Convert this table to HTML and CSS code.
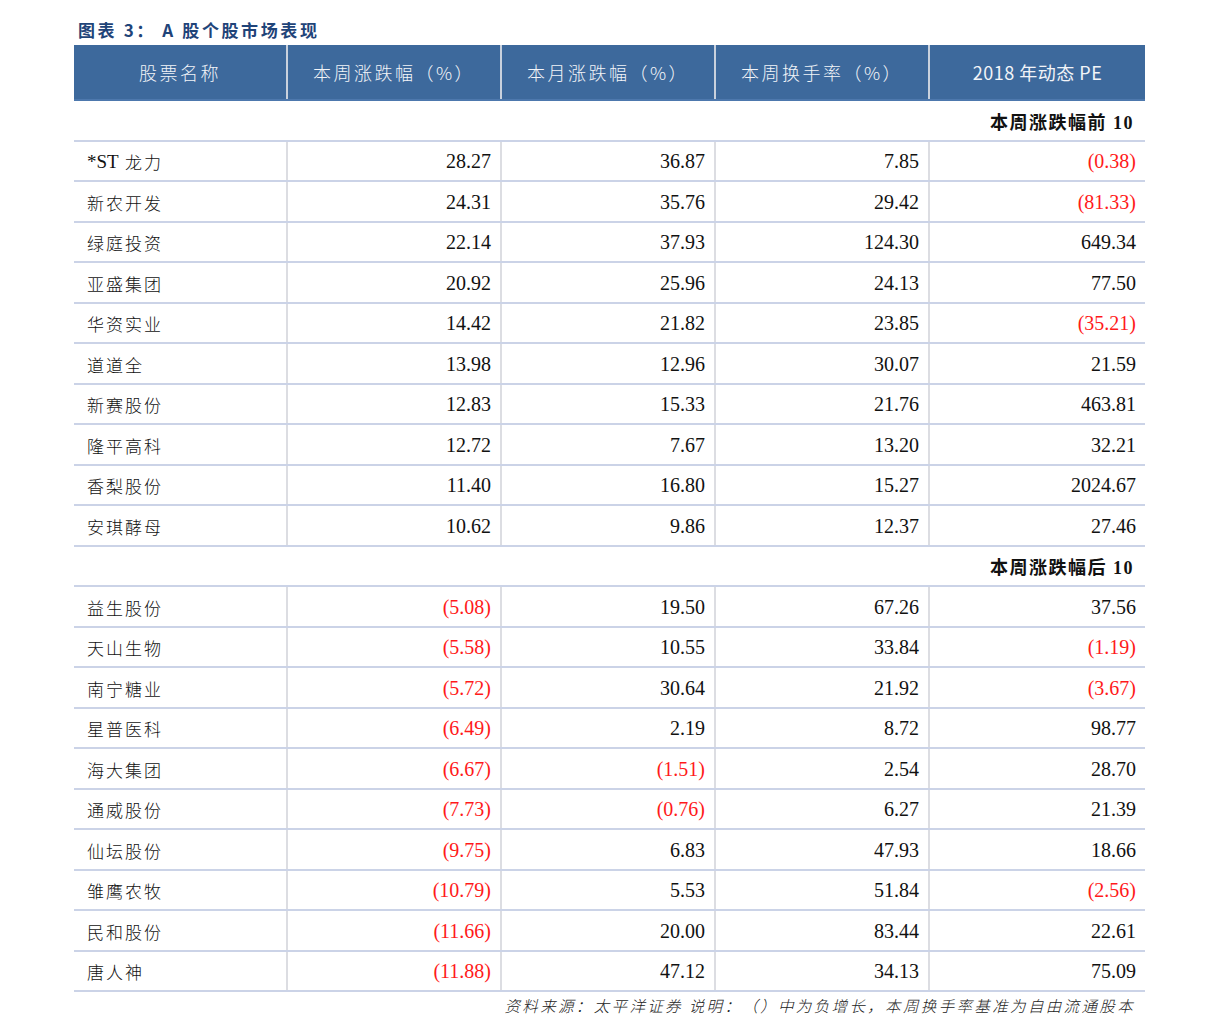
FILE: index.html
```html
<!DOCTYPE html>
<html lang="zh">
<head>
<meta charset="utf-8">
<link rel="stylesheet" href="styles.css">
</head>
<body>
<div class="page">
  <div class="title">图表 3： A 股个股市场表现</div>
  <div class="table">
    <div class="row head">
      <div class="cell">股票名称</div>
      <div class="cell">本周涨跌幅（%）</div>
      <div class="cell">本月涨跌幅（%）</div>
      <div class="cell">本周换手率（%）</div>
      <div class="cell pe">2018 年动态 PE</div>
    </div>
    <div class="row section"><div class="sec">本周涨跌幅前 10</div></div>
    <div class="row"><div class="cell name"><span class="lat">*ST</span>&nbsp;龙力</div><div class="cell">28.27</div><div class="cell">36.87</div><div class="cell">7.85</div><div class="cell neg">(0.38)</div></div>
    <div class="row"><div class="cell name">新农开发</div><div class="cell">24.31</div><div class="cell">35.76</div><div class="cell">29.42</div><div class="cell neg">(81.33)</div></div>
    <div class="row"><div class="cell name">绿庭投资</div><div class="cell">22.14</div><div class="cell">37.93</div><div class="cell">124.30</div><div class="cell">649.34</div></div>
    <div class="row"><div class="cell name">亚盛集团</div><div class="cell">20.92</div><div class="cell">25.96</div><div class="cell">24.13</div><div class="cell">77.50</div></div>
    <div class="row"><div class="cell name">华资实业</div><div class="cell">14.42</div><div class="cell">21.82</div><div class="cell">23.85</div><div class="cell neg">(35.21)</div></div>
    <div class="row"><div class="cell name">道道全</div><div class="cell">13.98</div><div class="cell">12.96</div><div class="cell">30.07</div><div class="cell">21.59</div></div>
    <div class="row"><div class="cell name">新赛股份</div><div class="cell">12.83</div><div class="cell">15.33</div><div class="cell">21.76</div><div class="cell">463.81</div></div>
    <div class="row"><div class="cell name">隆平高科</div><div class="cell">12.72</div><div class="cell">7.67</div><div class="cell">13.20</div><div class="cell">32.21</div></div>
    <div class="row"><div class="cell name">香梨股份</div><div class="cell">11.40</div><div class="cell">16.80</div><div class="cell">15.27</div><div class="cell">2024.67</div></div>
    <div class="row"><div class="cell name">安琪酵母</div><div class="cell">10.62</div><div class="cell">9.86</div><div class="cell">12.37</div><div class="cell">27.46</div></div>
    <div class="row section"><div class="sec">本周涨跌幅后 10</div></div>
    <div class="row"><div class="cell name">益生股份</div><div class="cell neg">(5.08)</div><div class="cell">19.50</div><div class="cell">67.26</div><div class="cell">37.56</div></div>
    <div class="row"><div class="cell name">天山生物</div><div class="cell neg">(5.58)</div><div class="cell">10.55</div><div class="cell">33.84</div><div class="cell neg">(1.19)</div></div>
    <div class="row"><div class="cell name">南宁糖业</div><div class="cell neg">(5.72)</div><div class="cell">30.64</div><div class="cell">21.92</div><div class="cell neg">(3.67)</div></div>
    <div class="row"><div class="cell name">星普医科</div><div class="cell neg">(6.49)</div><div class="cell">2.19</div><div class="cell">8.72</div><div class="cell">98.77</div></div>
    <div class="row"><div class="cell name">海大集团</div><div class="cell neg">(6.67)</div><div class="cell neg">(1.51)</div><div class="cell">2.54</div><div class="cell">28.70</div></div>
    <div class="row"><div class="cell name">通威股份</div><div class="cell neg">(7.73)</div><div class="cell neg">(0.76)</div><div class="cell">6.27</div><div class="cell">21.39</div></div>
    <div class="row"><div class="cell name">仙坛股份</div><div class="cell neg">(9.75)</div><div class="cell">6.83</div><div class="cell">47.93</div><div class="cell">18.66</div></div>
    <div class="row"><div class="cell name">雏鹰农牧</div><div class="cell neg">(10.79)</div><div class="cell">5.53</div><div class="cell">51.84</div><div class="cell neg">(2.56)</div></div>
    <div class="row"><div class="cell name">民和股份</div><div class="cell neg">(11.66)</div><div class="cell">20.00</div><div class="cell">83.44</div><div class="cell">22.61</div></div>
    <div class="row"><div class="cell name">唐人神</div><div class="cell neg">(11.88)</div><div class="cell">47.12</div><div class="cell">34.13</div><div class="cell">75.09</div></div>
  </div>
  <div class="note">资料来源：太平洋证券 说明：（）中为负增长，本周换手率基准为自由流通股本</div>
</div>
</body>
</html>
```

FILE: styles.css
```css
html, body {
  margin: 0;
  padding: 0;
  background: #ffffff;
}
.page {
  padding: 20px 80px 0 74px;
  font-family: "Liberation Serif", "Noto Sans CJK SC", serif;
  color: #111;
}
.title {
  height: 25px;
  line-height: 20px;
  padding-left: 4px;
  font-family: "Noto Sans CJK SC", sans-serif;
  font-weight: 700;
  font-size: 17px;
  letter-spacing: 2.6px;
  color: #1f4479;
}
.table {
  width: 1071px;
  display: flex;
  flex-direction: column;
}
.row {
  display: grid;
  grid-template-columns: 214px 214px 214px 214px 215px;
  height: 40.5px;
  box-sizing: border-box;
  border-bottom: 2px solid #cbd3e7;
}
.cell {
  display: flex;
  align-items: center;
  justify-content: flex-end;
  padding: 2px 9px 0 0;
  font-size: 20px;
  border-right: 2px solid #dcdde2;
}
.cell:last-child {
  border-right: none;
}
.cell.name {
  justify-content: flex-start;
  padding-left: 13px;
  font-family: "Liberation Serif", "Noto Sans CJK SC", serif;
  font-weight: 300;
  font-size: 17px;
  letter-spacing: 2px;
  white-space: pre;
}
.lat {
  font-size: 19px;
  letter-spacing: 0;
}
.neg {
  color: #ff1a1a;
}
.row.head {
  height: 56px;
  background: #3d699c;
  border-bottom: 2px solid #4d78ad;
}
.head .cell {
  justify-content: center;
  padding: 0;
  font-family: "Noto Sans CJK SC", sans-serif;
  font-weight: 300;
  font-size: 18px;
  letter-spacing: 2.5px;
  color: #f2f4f8;
  border-right: 2px solid #c9d1dd;
}
.head .cell:last-child {
  border-right: none;
}
.head .cell.pe {
  letter-spacing: 0.5px;
  font-weight: 400;
}
.row.section {
  display: flex;
  justify-content: flex-end;
  align-items: center;
}
.sec {
  padding-right: 11px;
  padding-top: 1px;
  font-family: "Liberation Serif", "Noto Sans CJK SC", serif;
  font-weight: 700;
  font-size: 18px;
  letter-spacing: 1.5px;
  color: #111;
}
.note {
  width: 1061px;
  text-align: right;
  padding-top: 2px;
  font-family: "Noto Sans CJK SC", sans-serif;
  font-style: italic;
  font-weight: 300;
  font-size: 15.5px;
  letter-spacing: 2.35px;
  color: #222;
}
```
